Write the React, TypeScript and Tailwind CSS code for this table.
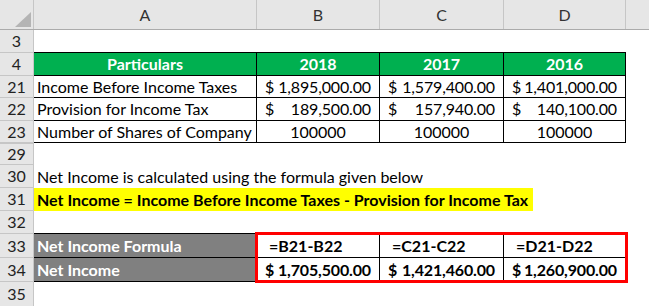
import React from "react";

const FONT = { fontFamily: "Lato, 'Open Sans', sans-serif" };

function RowHead({ n, h, extraTop = false }: { n: string; h: string; extraTop?: boolean }) {
  return (
    <div
      className={`w-[34px] shrink-0 ${h} flex items-center justify-center bg-[#e6e6e6] border-r border-b border-[#c6c6c6] text-[16px] text-[#222] ${extraTop ? "border-t" : ""}`}
    >
      {n}
    </div>
  );
}

function Acct({ v, bold = false }: { v: string; bold?: boolean }) {
  return (
    <div className={`flex justify-between pl-2 pr-[8px] w-full text-[16px] tracking-[-0.15px] ${bold ? "font-bold" : ""}`}>
      <span>$</span>
      <span>{v}</span>
    </div>
  );
}

export default function App() {
  const colA = "w-[223px] shrink-0";
  const colB = "w-[123px] shrink-0";
  const colC = "w-[124px] shrink-0";
  const colD = "w-[122px] shrink-0";
  const tb = "border-r border-b border-black flex items-center";
  return (
    <div className="w-[649px] h-[306px] overflow-hidden bg-white text-[16px] text-black" style={FONT}>
      {/* column headers */}
      <div className="flex h-[30px] bg-[#e6e6e6] border-b border-[#ababab] text-[16px] text-[#333]">
        <div className="w-[34px] shrink-0 border-r border-[#c6c6c6] relative">
          <svg className="absolute left-[15px] top-[12px]" width="16" height="15" viewBox="0 0 16 15">
            <polygon points="16,0 16,15 0,15" fill="#b4b4b4" />
          </svg>
        </div>
        <div className={`${colA} border-r border-[#c6c6c6] flex items-center justify-center`}>A</div>
        <div className={`${colB} border-r border-[#c6c6c6] flex items-center justify-center`}>B</div>
        <div className={`${colC} border-r border-[#c6c6c6] flex items-center justify-center`}>C</div>
        <div className={`${colD} border-r border-[#c6c6c6] flex items-center justify-center`}>D</div>
        <div className="flex-1" />
      </div>

      {/* row 3 */}
      <div className="flex h-[23px]">
        <RowHead n="3" h="h-[23px]" />
        <div className={`${colA} border-b border-black`} />
        <div className={`${colB} border-b border-black`} />
        <div className={`${colC} border-b border-black`} />
        <div className={`${colD} border-b border-black`} />
      </div>

      {/* row 4 */}
      <div className="flex h-[23px]">
        <RowHead n="4" h="h-[23px]" />
        <div className={`${colA} ${tb} justify-center bg-[#00b050] text-white font-bold`}>Particulars</div>
        <div className={`${colB} ${tb} justify-center bg-[#00b050] text-white font-bold`}>2018</div>
        <div className={`${colC} ${tb} justify-center bg-[#00b050] text-white font-bold`}>2017</div>
        <div className={`${colD} ${tb} justify-center bg-[#00b050] text-white font-bold`}>2016</div>
      </div>

      {/* row 21 */}
      <div className="flex h-[22px]">
        <RowHead n="21" h="h-[22px]" />
        <div className={`${colA} ${tb} pl-[3px]`}>Income Before Income Taxes</div>
        <div className={`${colB} ${tb}`}><Acct v="1,895,000.00" /></div>
        <div className={`${colC} ${tb}`}><Acct v="1,579,400.00" /></div>
        <div className={`${colD} ${tb}`}><Acct v="1,401,000.00" /></div>
      </div>

      {/* row 22 */}
      <div className="flex h-[23px]">
        <RowHead n="22" h="h-[23px]" />
        <div className={`${colA} ${tb} pl-[3px]`}>Provision for Income Tax</div>
        <div className={`${colB} ${tb}`}><Acct v="189,500.00" /></div>
        <div className={`${colC} ${tb}`}><Acct v="157,940.00" /></div>
        <div className={`${colD} ${tb}`}><Acct v="140,100.00" /></div>
      </div>

      {/* row 23 */}
      <div className="flex h-[22px]">
        <RowHead n="23" h="h-[22px]" />
        <div className={`${colA} ${tb} pl-[3px]`}>Number of Shares of Company</div>
        <div className={`${colB} ${tb} justify-center`}>100000</div>
        <div className={`${colC} ${tb} justify-center`}>100000</div>
        <div className={`${colD} ${tb} justify-center`}>100000</div>
      </div>

      {/* row 29 */}
      <div className="flex h-[22px]">
        <RowHead n="29" h="h-[22px]" extraTop />
      </div>

      {/* row 30 */}
      <div className="flex h-[23px]">
        <RowHead n="30" h="h-[23px]" />
        <div className="pl-[3px] flex items-center whitespace-nowrap">Net Income is calculated using the formula given below</div>
      </div>

      {/* row 31 */}
      <div className="flex h-[23px]">
        <RowHead n="31" h="h-[23px]" />
        <div className="w-[499px] shrink-0 bg-[#ffff00] pl-[3px] flex items-center whitespace-nowrap font-bold">
          Net Income = Income Before Income Taxes - Provision for Income Tax
        </div>
      </div>

      {/* row 32 */}
      <div className="flex h-[23px]">
        <RowHead n="32" h="h-[23px]" />
        <div className={`${colA} border-b border-black`} />
      </div>

      {/* rows 33-34 */}
      <div className="relative">
        <div className="flex h-[24px]">
          <RowHead n="33" h="h-[24px]" />
          <div className={`${colA} ${tb} pl-[3px] bg-[#808080] text-white font-bold`}>Net Income Formula</div>
          <div className={`${colB} ${tb} pl-3 font-bold`}>=B21-B22</div>
          <div className={`${colC} ${tb} pl-3 font-bold`}>=C21-C22</div>
          <div className={`${colD} ${tb} pl-3 font-bold`}>=D21-D22</div>
        </div>
        <div className="flex h-[24px]">
          <RowHead n="34" h="h-[24px]" />
          <div className={`${colA} ${tb} pl-[3px] bg-[#808080] text-white font-bold`}>Net Income</div>
          <div className={`${colB} ${tb}`}><Acct v="1,705,500.00" bold /></div>
          <div className={`${colC} ${tb}`}><Acct v="1,421,460.00" bold /></div>
          <div className={`${colD} ${tb}`}><Acct v="1,260,900.00" bold /></div>
        </div>
        <div className="absolute left-[255px] top-[-2px] w-[373px] h-[51px] border-[3px] border-[#ff0000] pointer-events-none" />
      </div>

      {/* row 35 */}
      <div className="flex h-[25px]">
        <RowHead n="35" h="h-[25px]" />
      </div>
    </div>
  );
}
